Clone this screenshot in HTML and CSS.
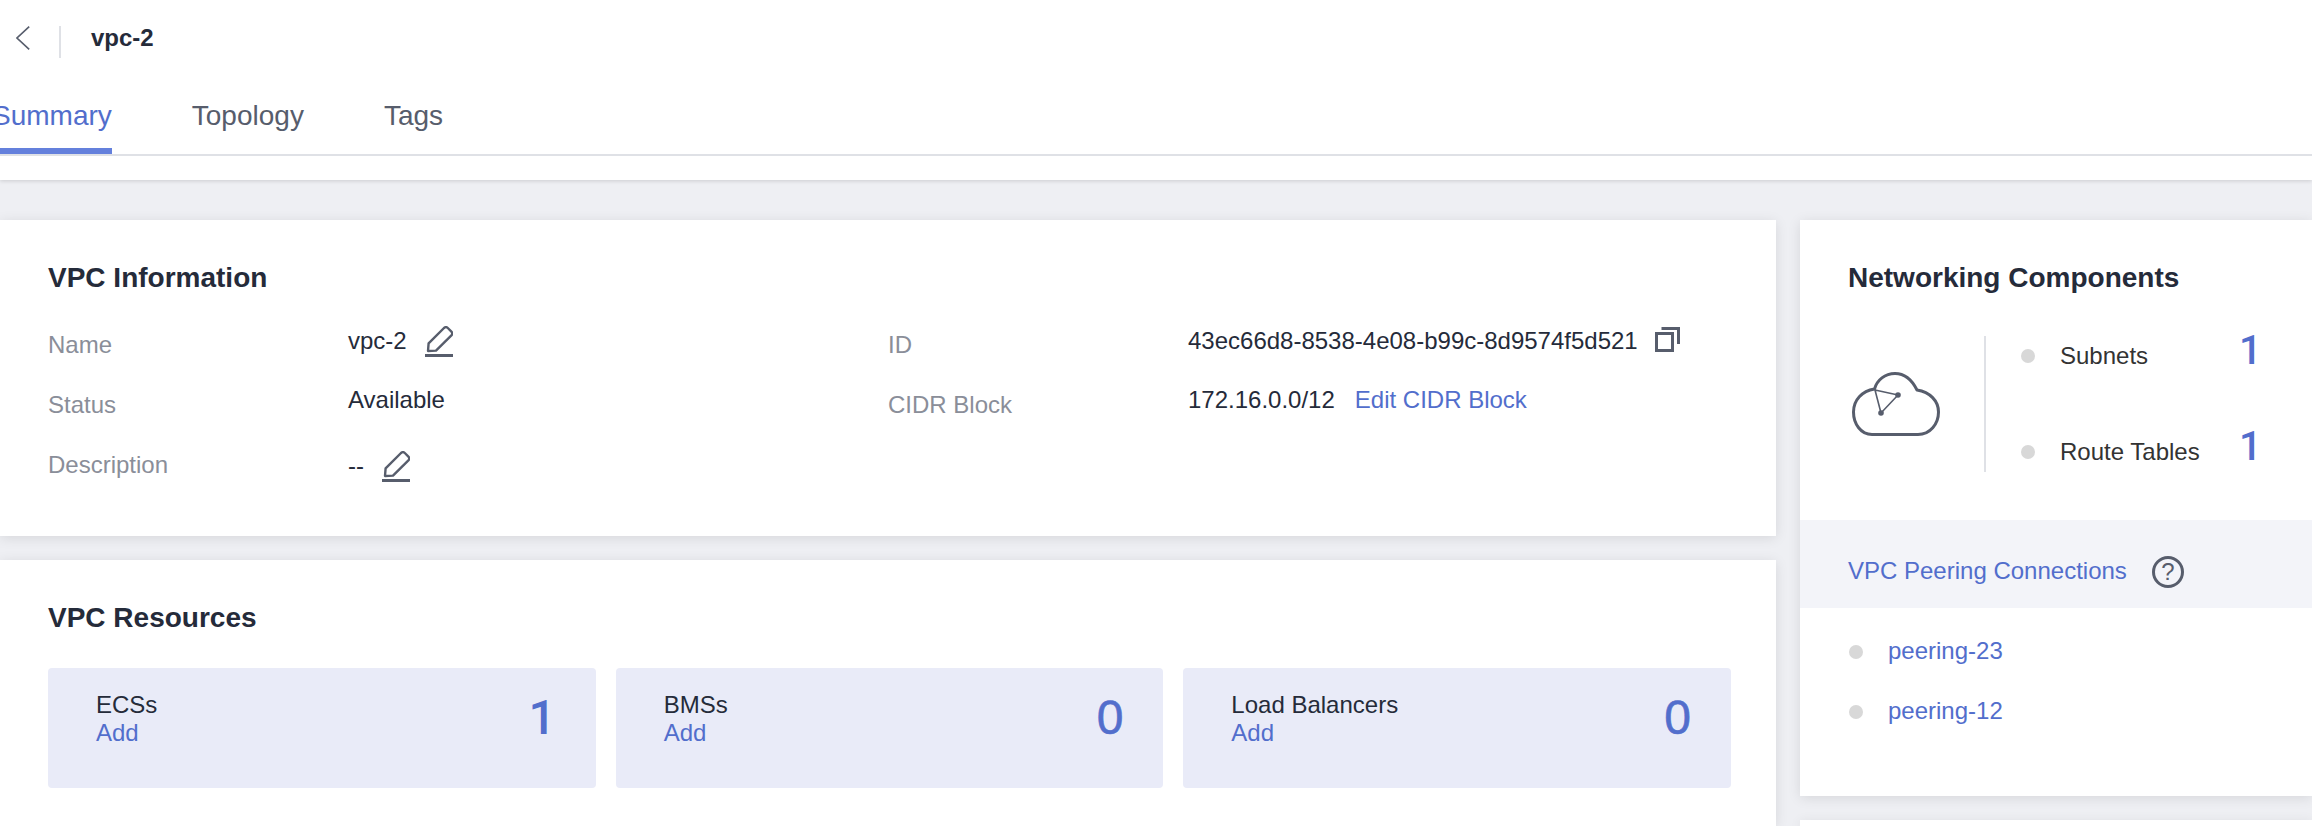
FILE: index.html
```html
<!DOCTYPE html>
<html lang="en">
<head>
  <meta charset="UTF-8">
  <title>vpc-2</title>
  <link rel="stylesheet" href="styles.css">
</head>
<body>

  <header class="page-header">
    <div class="title-bar">
      <svg class="back-icon" width="14" height="24" viewBox="0 0 14 24"><path d="M13.2 .6 1 12l12.2 11.4"/></svg>
      <span class="title-divider"></span>
      <span class="page-title">vpc-2</span>
    </div>
    <nav class="tabs">
      <div class="tab active">Summary</div>
      <div class="tab">Topology</div>
      <div class="tab">Tags</div>
    </nav>
  </header>

  <main class="content">
    <div class="left-col">
      <section class="card info-card">
        <h3>VPC Information</h3>
        <div class="info-grid">
          <div class="info-row">
            <span class="label">Name</span>
            <span class="value">
              <span>vpc-2</span>
              <svg class="edit-icon" width="28" height="31" viewBox="0 0 28 31"><path d="M3 25l.6-7.6L19 2q2-1.800 3.800 0l3.600 3.600q1.800 1.800 0 3.800L11 24.600z"/><path class="thick" d="M0 29.500h28"/></svg>
            </span>
          </div>
          <div class="info-row">
            <span class="label">ID</span>
            <span class="value">
              <span>43ec66d8-8538-4e08-b99c-8d9574f5d521</span>
              <svg class="copy-icon" width="25" height="25" viewBox="0 0 25 25"><path d="M1.500 6.500h16v17h-16z"/><path d="M6.500 1.500h17V17"/></svg>
            </span>
          </div>
          <div class="info-row">
            <span class="label">Status</span>
            <span class="value value-high"><span>Available</span></span>
          </div>
          <div class="info-row">
            <span class="label">CIDR Block</span>
            <span class="value value-high">
              <span>172.16.0.0/12</span>
              <a class="link cidr-link">Edit CIDR Block</a>
            </span>
          </div>
          <div class="info-row">
            <span class="label">Description</span>
            <span class="value value-low">
              <span>--</span>
              <svg class="edit-icon" width="28" height="31" viewBox="0 0 28 31"><path d="M3 25l.6-7.6L19 2q2-1.800 3.800 0l3.600 3.600q1.800 1.800 0 3.800L11 24.600z"/><path class="thick" d="M0 29.500h28"/></svg>
            </span>
          </div>
        </div>
      </section>

      <section class="card resources-card">
        <h3>VPC Resources</h3>
        <div class="tiles">
          <div class="tile">
            <div>
              <div class="tile-name">ECSs</div>
              <a class="link">Add</a>
            </div>
            <div class="tile-count one">1</div>
          </div>
          <div class="tile">
            <div>
              <div class="tile-name">BMSs</div>
              <a class="link">Add</a>
            </div>
            <div class="tile-count">0</div>
          </div>
          <div class="tile">
            <div>
              <div class="tile-name">Load Balancers</div>
              <a class="link">Add</a>
            </div>
            <div class="tile-count">0</div>
          </div>
        </div>
      </section>
    </div>

    <div class="right-col">
      <section class="card network-card">
        <h3>Networking Components</h3>
        <div class="components">
          <div class="cloud-box">
            <svg class="cloud-icon" width="88" height="64" viewBox="0 0 88 64">
              <path d="M20 62.500h46c12 0 20.500-10.500 20.500-22.500 0-11-8.500-20-21.500-22C60 8 52 1.500 43 1.500 33 1.500 25 8 22.500 17 10 19 1.500 28 1.500 40c0 12 7.500 22.500 18.500 22.500z"/>
              <path class="thin" d="M23 18l23 5-17 18z"/>
              <circle cx="46" cy="23" r="2.800"/>
              <circle cx="29" cy="41" r="2.800"/>
            </svg>
          </div>
          <div class="stats">
            <div class="stat">
              <span class="dot"></span>
              <span class="stat-name">Subnets</span>
              <span class="stat-count one">1</span>
            </div>
            <div class="stat">
              <span class="dot"></span>
              <span class="stat-name">Route Tables</span>
              <span class="stat-count one">1</span>
            </div>
          </div>
        </div>
        <div class="peering-head">
          <a class="link">VPC Peering Connections</a>
          <span class="help-icon">?</span>
        </div>
        <ul class="peering-list">
          <li><span class="dot"></span><a class="link">peering-23</a></li>
          <li><span class="dot"></span><a class="link">peering-12</a></li>
        </ul>
      </section>
      <section class="card next-card"></section>
    </div>
  </main>

</body>
</html>
```

FILE: styles.css
```css
body {
  margin: 0;
  height: 100vh;
  overflow: hidden;
  background: #eeeff3;
  color: #252b3a;
  font-family: "Liberation Sans", Arial, sans-serif;
  font-size: 24px;
}

.page-header {
  height: 180px;
  background: white;
  box-shadow: 0 1px 4px rgba(0, 0, 0, 0.15);
  position: relative;
}

.title-bar {
  height: 84px;
  display: flex;
  align-items: center;
  padding-left: 16px;
  box-sizing: border-box;
  padding-bottom: 8px;
}

.back-icon {
  fill: none;
  stroke: #575d6c;
  stroke-width: 1.6;
}

.title-divider {
  width: 2px;
  height: 32px;
  background: #dfe1e6;
  margin: 8px 30px 0 29px;
}

.page-title {
  font-weight: bold;
}

.tabs {
  height: 70px;
  display: flex;
  gap: 80px;
  margin-left: -8px;
  border-bottom: 2px solid #dfe1e6;
}

.tab {
  font-size: 28px;
  line-height: 64px;
  color: #575d6c;
  height: 64px;
}

.tab.active {
  color: #526ecc;
  border-bottom: 6px solid #6480dc;
}

.content {
  display: flex;
  gap: 24px;
  padding-top: 40px;
}

.left-col {
  width: 1776px;
  flex-shrink: 0;
  display: flex;
  flex-direction: column;
  gap: 24px;
}

.right-col {
  flex: 1;
  display: flex;
  flex-direction: column;
  gap: 24px;
}

.card {
  background: white;
  box-shadow: 0 2px 12px rgba(0, 0, 0, 0.1);
}

.card h3 {
  margin: 0;
  font-size: 28px;
  line-height: 36px;
  font-weight: bold;
}

.info-card {
  height: 316px;
  box-sizing: border-box;
  padding: 40px 48px 0;
}

.info-grid {
  display: grid;
  grid-template-columns: 840px 1fr;
  grid-auto-rows: 60px;
  margin-top: 33px;
}

.info-row {
  display: flex;
  line-height: 32px;
}

.label {
  width: 300px;
  flex-shrink: 0;
  color: #8a8e99;
}

.value {
  display: flex;
  align-items: center;
  height: 32px;
  gap: 18px;
  margin-top: -4px;
}

.value-high {
  margin-top: -5px;
}

.value-low {
  margin-top: 1px;
}

.edit-icon {
  fill: none;
  stroke: #575d6c;
  stroke-width: 2.4;
  stroke-linejoin: round;
}

.edit-icon .thick {
  stroke-width: 3;
}

.copy-icon {
  fill: none;
  stroke: #575d6c;
  stroke-width: 3;
  margin: -3px 0 0 -1px;
}

.link {
  color: #526ecc;
}

.cidr-link {
  margin-left: 2px;
}

.resources-card {
  height: 266px;
  box-sizing: border-box;
  padding: 40px 45px 0 48px;
}

.tiles {
  display: flex;
  gap: 20px;
  margin-top: 32px;
}

.tile {
  flex: 1;
  height: 120px;
  box-sizing: border-box;
  padding: 23px 40px 0 48px;
  background: #e9ebf8;
  border-radius: 4px;
  display: flex;
  justify-content: space-between;
  line-height: 28px;
}

.tile-count {
  font-size: 48px;
  line-height: 54px;
  color: #526ecc;
  -webkit-text-stroke: 0.6px #526ecc;
}

/* Liberation's 1 has a foot, the reference's does not */
.one {
  font-family: Roboto, sans-serif;
  font-weight: 500;
  -webkit-text-stroke: 0;
}

.network-card {
  height: 576px;
  padding-top: 40px;
  box-sizing: border-box;
}

.network-card h3 {
  padding-left: 48px;
}

.components {
  display: flex;
  align-items: center;
  height: 136px;
  margin-top: 40px;
  padding-left: 52px;
}

.cloud-box {
  width: 132px;
  display: flex;
}

.stats {
  height: 136px;
  box-sizing: border-box;
  border-left: 2px solid #dfe1e6;
  padding-left: 35px;
  display: flex;
  flex-direction: column;
  gap: 56px;
}

.cloud-icon {
  fill: none;
  stroke: #575d6c;
  stroke-width: 3;
}

.cloud-icon .thin {
  stroke-width: 1.6;
  stroke-linejoin: round;
}

.cloud-icon circle {
  fill: #575d6c;
  stroke: none;
}

.stat {
  display: flex;
  align-items: center;
  height: 40px;
  color: #333;
}

.dot {
  display: inline-block;
  width: 14px;
  height: 14px;
  border-radius: 50%;
  background: #d8d8d8;
  flex-shrink: 0;
}

.stat-name {
  width: 179px;
  margin-left: 25px;
}

.stat-count {
  font-size: 40px;
  line-height: 40px;
  color: #526ecc;
  margin-top: -10px;
}

.peering-head {
  height: 88px;
  box-sizing: border-box;
  margin-top: 48px;
  padding: 36px 0 0 48px;
  background: #f3f4f9;
  display: flex;
  align-items: flex-start;
  line-height: 32px;
  gap: 25px;
}

.peering-head .link {
  margin-top: -1px;
}

.help-icon {
  width: 32px;
  height: 32px;
  box-sizing: border-box;
  border: 3px solid #575d6c;
  border-radius: 50%;
  color: #575d6c;
  font-size: 24px;
  line-height: 26px;
  text-align: center;
}

.peering-list {
  list-style: none;
  margin: 0;
  padding: 28px 0 0 49px;
}

.peering-list li {
  display: flex;
  align-items: center;
  gap: 25px;
  height: 60px;
  line-height: 32px;
  padding-bottom: 28px;
  box-sizing: border-box;
}

.peering-list .link {
  margin-top: -2px;
}

.next-card {
  height: 6px;
}
```
